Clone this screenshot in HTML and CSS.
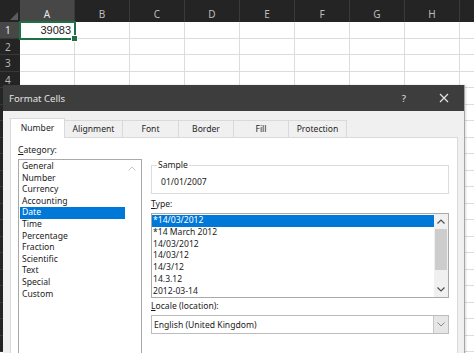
FILE: index.html
```html
<!DOCTYPE html>
<html lang="en">
<head>
    <meta charset="UTF-8">
    <title>Format Cells</title>
    <link rel="stylesheet" href="styles.css">
</head>
<body>
    <div class="sheet">
        <div class="hdr-row">
            <div class="corner"><svg width="20" height="22"><polygon points="18,12 18,20 10,20" fill="#5c5c5c"/></svg></div>
            <div class="ch sel">A</div>
            <div class="ch">B</div>
            <div class="ch">C</div>
            <div class="ch">D</div>
            <div class="ch">E</div>
            <div class="ch">F</div>
            <div class="ch">G</div>
            <div class="ch">H</div>
            <div class="ch"></div>
        </div>
        <div class="row"><div class="rh sel">1</div><div class="cell active">39083</div></div>
        <div class="row"><div class="rh">2</div></div>
        <div class="row"><div class="rh">3</div></div>
        <div class="row"><div class="rh">4</div></div>
        <div class="row"><div class="rh"></div></div>
        <div class="row"><div class="rh"></div></div>
        <div class="row"><div class="rh"></div></div>
        <div class="row"><div class="rh"></div></div>
        <div class="row"><div class="rh"></div></div>
        <div class="row"><div class="rh"></div></div>
        <div class="row"><div class="rh"></div></div>
        <div class="row"><div class="rh"></div></div>
        <div class="row"><div class="rh"></div></div>
        <div class="row"><div class="rh"></div></div>
        <div class="row"><div class="rh"></div></div>
        <div class="row"><div class="rh"></div></div>
        <div class="row"><div class="rh"></div></div>
        <div class="row"><div class="rh"></div></div>
        <div class="row"><div class="rh"></div></div>
        <div class="row"><div class="rh"></div></div>
    </div>

    <div class="dialog">
        <div class="titlebar">
            <span class="title">Format Cells</span>
            <span class="help">?</span>
            <svg class="close" width="10" height="10"><path d="M1 1 L9 9 M9 1 L1 9" stroke="#e6e6e6" stroke-width="1.2"/></svg>
        </div>
        <div class="dlg-body">
            <div class="tabs">
                <div class="tab active">Number</div>
                <div class="tab w58">Alignment</div>
                <div class="tab w56">Font</div>
                <div class="tab">Border</div>
                <div class="tab">Fill</div>
                <div class="tab w58">Protection</div>
            </div>
            <div class="panel">
                <div class="left-col">
                    <div class="label"><u>C</u>ategory:</div>
                    <div class="cat-list">
                        <div class="items">
                            <div class="item">General</div>
                            <div class="item">Number</div>
                            <div class="item">Currency</div>
                            <div class="item">Accounting</div>
                            <div class="item selected">Date</div>
                            <div class="item">Time</div>
                            <div class="item">Percentage</div>
                            <div class="item">Fraction</div>
                            <div class="item">Scientific</div>
                            <div class="item">Text</div>
                            <div class="item">Special</div>
                            <div class="item">Custom</div>
                        </div>
                        <div class="cat-scroll">
                            <svg width="8" height="5"><polyline points="0.5,4.5 4,1 7.5,4.5" fill="none" stroke="#c4c4c4" stroke-width="1"/></svg>
                        </div>
                    </div>
                </div>
                <div class="right-col">
                    <div class="sample">
                        <div class="sample-title">Sample</div>
                        <div class="sample-value">01/01/2007</div>
                    </div>
                    <div class="label type-label"><u>T</u>ype:</div>
                    <div class="type-list">
                        <div class="items">
                            <div class="item selected">*14/03/2012</div>
                            <div class="item">*14 March 2012</div>
                            <div class="item">14/03/2012</div>
                            <div class="item">14/03/12</div>
                            <div class="item">14/3/12</div>
                            <div class="item">14.3.12</div>
                            <div class="item">2012-03-14</div>
                        </div>
                        <div class="vscroll">
                            <div class="arrow"><svg width="8" height="5"><polyline points="0.5,4.5 4,1 7.5,4.5" fill="none" stroke="#505050" stroke-width="1.2"/></svg></div>
                            <div class="thumb"></div>
                            <div class="track"></div>
                            <div class="arrow"><svg width="8" height="5"><polyline points="0.5,0.5 4,4 7.5,0.5" fill="none" stroke="#505050" stroke-width="1.2"/></svg></div>
                        </div>
                    </div>
                    <div class="label locale-label"><u>L</u>ocale (location):</div>
                    <div class="dropdown">
                        <span class="dd-text">English (United Kingdom)</span>
                        <span class="dd-btn"><svg width="8" height="5"><polyline points="0.5,0.5 4,4 7.5,0.5" fill="none" stroke="#8a8a8a" stroke-width="1"/></svg></span>
                    </div>
                </div>
            </div>
        </div>
    </div>
</body>
</html>
```

FILE: styles.css
```css
*
{
    box-sizing: border-box;
}

body
{
    margin: 0;
    width: 474px;
    height: 353px;
    overflow: hidden;
    background-color: white;
    font-family: "Noto Sans", "Open Sans", sans-serif;
    font-size: 8.6px;
    color: #1a1a1a;
    position: relative;
}

/* spreadsheet behind the dialog */

.sheet
{
    width: 474px;
    height: 353px;
    overflow: hidden;
}

.hdr-row
{
    display: flex;
    height: 22px;
    background-color: #242424;
}

.corner
{
    width: 20px;
    flex: none;
    height: 22px;
}

.corner svg
{
    display: block;
}

.ch
{
    width: 55px;
    flex: none;
    border-right: 1px solid #3a3a3a;
    color: #bdbdbd;
    font-size: 10px;
    text-align: center;
    padding-top: 7px;
}

.ch.sel
{
    background-color: #474747;
    color: #e8e8e8;
    border-bottom: 1px solid #6a6a6a;
}

.row
{
    display: flex;
    height: 17px;
    background:
        linear-gradient(to top, #dcdcdc 1px, transparent 1px),
        repeating-linear-gradient(90deg, transparent 0 54px, #dcdcdc 54px 55px);
    background-position: 0 0, 20px 0;
}

.row:nth-child(odd)
{
    height: 16px;
}

.rh
{
    width: 20px;
    flex: none;
    background-color: #242424;
    border-bottom: 1px solid #383838;
    color: #b5b5b5;
    font-size: 10px;
    padding-left: 5px;
    line-height: 16px;
}

.rh.sel
{
    background-color: #474747;
    color: #e8e8e8;
}

.cell
{
    width: 55px;
    flex: none;
    font-family: "Liberation Sans", Arial, sans-serif;
    font-size: 11px;
    text-align: right;
    padding-right: 3px;
    line-height: 17px;
    color: #222;
}

.cell.active
{
    position: relative;
    margin-left: -1px;
    width: 57px;
    border: 2px solid #1e7145;
    margin-top: -1px;
    height: 19px;
    line-height: 15px;
}

.cell.active::after
{
    content: "";
    position: absolute;
    right: -4px;
    bottom: -4px;
    width: 5px;
    height: 5px;
    background-color: #1e7145;
    border: 1px solid white;
}

/* dialog */

.dialog
{
    position: absolute;
    left: 3px;
    top: 85px;
    width: 462px;
    height: 268px;
    overflow: hidden;
    background-color: #f0f0f0;
    border-right: 1px solid #a6a6a6;
    box-shadow: 1px 0 2px rgba(0, 0, 0, 0.15);
}

.titlebar
{
    height: 26px;
    background-color: #3d3d3d;
    display: flex;
    align-items: center;
    padding-left: 6px;
    color: #e2e2e2;
}

.title
{
    font-size: 9.6px;
    flex: 1;
}

.help
{
    font-size: 9.6px;
    margin-right: 33px;
}

.close
{
    margin-right: 15px;
}

.dlg-body
{
    padding: 7px 6px 0 7px;
}

.tabs
{
    display: flex;
    height: 19px;
    align-items: flex-end;
}

.tab
{
    width: 55px;
    height: 17px;
    border: 1px solid #d9d9d9;
    border-bottom: none;
    border-left: none;
    text-align: center;
    line-height: 16px;
    color: #262626;
}

.tab.w58
{
    width: 58px;
}

.tab.w56
{
    width: 56px;
}

.tab.active
{
    height: 20px;
    background-color: white;
    border-left: 1px solid #d9d9d9;
    line-height: 19px;
    margin-bottom: -1px;
    position: relative;
}

.panel
{
    width: 448px;
    height: 216px;
    overflow: hidden;
    background-color: white;
    border: 1px solid #d9d9d9;
    border-bottom: none;
    display: flex;
    gap: 9px;
    padding: 6px 0 0 7px;
}

.label
{
    line-height: 12px;
    height: 12px;
}

.left-col
{
    width: 124px;
}

.cat-list
{
    margin-top: 3px;
    height: 220px;
    border: 1px solid #a9a9a9;
    display: flex;
    padding-top: 1px;
}

.items
{
    flex: 1;
}

.item
{
    height: 11.6px;
    line-height: 11.6px;
    padding-left: 2px;
    margin-left: 1px;
    white-space: nowrap;
}

.item.selected
{
    background-color: #0078d7;
    color: white;
}

.cat-scroll
{
    width: 16px;
    padding: 5px 0 0 3px;
}

.cat-scroll svg,
.arrow svg,
.dd-btn svg
{
    display: block;
}

.right-col
{
    width: 298px;
}

.sample
{
    margin-top: 21px;
    height: 29px;
    border: 1px solid #dcdcdc;
    padding-left: 5px;
}

.sample-title
{
    width: max-content;
    margin-top: -7px;
    padding: 0 1px;
    background-color: white;
    line-height: 12px;
}

.sample-value
{
    margin: 5px 0 0 4px;
    line-height: 12px;
}

.type-label
{
    margin-top: 4px;
}

.type-list
{
    margin-top: 3px;
    height: 85px;
    border: 1px solid #a9a9a9;
    display: flex;
}

.type-list .items
{
    padding-top: 1px;
}

.type-list .item
{
    height: 11.8px;
    line-height: 11.8px;
    margin-left: 0;
    padding-left: 1px;
}

.vscroll
{
    width: 14px;
    background-color: #f0f0f0;
    display: flex;
    flex-direction: column;
}

.arrow
{
    height: 15px;
    display: flex;
    align-items: center;
    justify-content: center;
}

.thumb
{
    height: 41px;
    margin: 0 1px;
    background-color: #cdcdcd;
}

.track
{
    flex: 1;
}

.locale-label
{
    margin-top: 2px;
}

.dropdown
{
    margin-top: 3px;
    height: 19px;
    border: 1px solid #bcbcbc;
    display: flex;
    align-items: center;
}

.dd-text
{
    flex: 1;
    padding-left: 2px;
}

.dd-btn
{
    width: 15px;
    height: 17px;
    background-color: #e6e6e6;
    border-left: 1px solid #c6c6c6;
    display: flex;
    align-items: center;
    justify-content: center;
}
```
